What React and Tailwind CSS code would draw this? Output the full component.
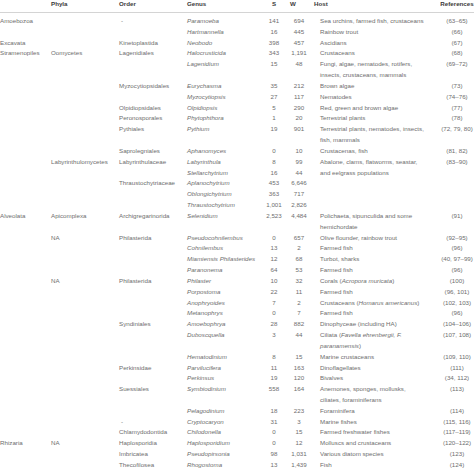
import React from 'react';

// Column template shared by header and body rows
const COLS = 'grid grid-cols-[51px_68px_68px_75px_24px_26px_128px_34px]';

const I = ({ children }) => <i>{children}</i>;

// [supergroup, phyla, order, genus, S, W, host, reference]
const ROWS = [
  ['Amoebozoa', '', '-', 'Paramoeba', '141', '694', 'Sea urchins, farmed fish, crustaceans', '(63–65)'],
  ['', '', '', 'Hartmannella', '16', '445', 'Rainbow trout', '(66)'],
  ['Excavata', '', 'Kinetoplastida', 'Neobodo', '398', '457', 'Ascidians', '(67)'],
  ['Stramenopiles', 'Oomycetes', 'Lagenidiales', 'Halocrusticida', '343', '1,191', 'Crustaceans', '(68)'],
  ['', '', '', 'Lagenidium', '15', '48', 'Fungi, algae, nematodes, rotifers,', '(69–72)'],
  ['', '', '', '', '', '', 'insects, crustaceans, mammals', ''],
  ['', '', 'Myzocytiopsidales', 'Eurychasma', '35', '212', 'Brown algae', '(73)'],
  ['', '', '', 'Myzocytiopsis', '27', '117', 'Nematodes', '(74–76)'],
  ['', '', 'Olpidiopsidales', 'Olpidiopsis', '5', '290', 'Red, green and brown algae', '(77)'],
  ['', '', 'Peronosporales', 'Phytophthora', '1', '20', 'Terrestrial plants', '(78)'],
  ['', '', 'Pythiales', 'Pythium', '19', '901', 'Terrestrial plants, nematodes, insects,', '(72, 79, 80)'],
  ['', '', '', '', '', '', 'fish, mammals', ''],
  ['', '', 'Saprolegniales', 'Aphanomyces', '0', '10', 'Crustacenas, fish', '(81, 82)'],
  ['', 'Labyrinthulomycetes', 'Labyrinthulaceae', 'Labyrinthula', '8', '99', 'Abalone, clams, flatworms, seastar,', '(83–90)'],
  ['', '', '', 'Stellarchytrium', '16', '44', 'and eelgrass populations', ''],
  ['', '', 'Thraustochytriaceae', 'Aplanochytrium', '453', '6,646', '', ''],
  ['', '', '', 'Oblongichytrium', '363', '717', '', ''],
  ['', '', '', 'Thraustochytrium', '1,001', '2,826', '', ''],
  ['Alveolata', 'Apicomplexa', 'Archigregarinorida', 'Selenidium', '2,523', '4,484', 'Polichaeta, sipunculida and some', '(91)'],
  ['', '', '', '', '', '', 'hemichordate', ''],
  ['', 'NA', 'Philasterida', 'Pseudocohnilembus', '0', '657', 'Olive flounder, rainbow trout', '(92–95)'],
  ['', '', '', 'Cohnilembus', '13', '2', 'Farmed fish', '(96)'],
  ['', '', '', 'Miamiensis Philasterides', '12', '68', 'Turbot, sharks', '(40, 97–99)'],
  ['', '', '', 'Paranonema', '64', '53', 'Farmed fish', '(96)'],
  ['', 'NA', 'Philasterida', 'Philaster', '10', '32', <>Corals (<I>Acropora muricata</I>)</>, '(100)'],
  ['', '', '', 'Porpostoma', '22', '11', 'Farmed fish', '(96, 101)'],
  ['', '', '', 'Anophryoides', '7', '2', <>Crustaceans (<I>Homarus americanus</I>)</>, '(102, 103)'],
  ['', '', '', 'Metanophrys', '0', '7', 'Farmed fish', '(96)'],
  ['', '', 'Syndiniales', 'Amoebophrya', '28', '882', 'Dinophyceae (including HA)', '(104–106)'],
  ['', '', '', 'Duboscquella', '3', '44', <>Ciliata (<I>Favella ehrenbergii, F.</I></>, '(107, 108)'],
  ['', '', '', '', '', '', <><I>paranamensis</I>)</>, ''],
  ['', '', '', 'Hematodinium', '8', '15', 'Marine crustaceans', '(109, 110)'],
  ['', '', 'Perkinsidae', 'Parvilucifera', '11', '163', 'Dinoflagellates', '(111)'],
  ['', '', '', 'Perkinsus', '19', '120', 'Bivalves', '(34, 112)'],
  ['', '', 'Suessiales', 'Symbiodinium', '558', '164', 'Anemones, sponges, mollusks,', '(113)'],
  ['', '', '', '', '', '', 'ciliates, foraminiferans', ''],
  ['', '', '', 'Pelagodinium', '18', '223', 'Foraminifera', '(114)'],
  ['', '', '-', 'Cryptocaryon', '31', '3', 'Marine fishes', '(115, 116)'],
  ['', '', 'Chlamydodontida', 'Chilodonella', '0', '15', 'Farmed freshwater fishes', '(117–119)'],
  ['Rhizaria', 'NA', 'Haplosporidia', 'Haplosporidium', '0', '12', 'Molluscs and crustaceans', '(120–122)'],
  ['', '', 'Imbricatea', 'Pseudopirsonia', '98', '1,031', 'Various diatom species', '(123)'],
  ['', '', 'Thecofilosea', 'Rhogostoma', '13', '1,439', 'Fish', '(124)'],
];

const Cell = ({ children, className = '' }) => (
  <div className={`whitespace-nowrap ${className}`}>{children}</div>
);

export default function App() {
  return (
    <div
      className="w-[474px] h-[468px] overflow-hidden bg-white text-[6.2px] text-[#6e6e6e]"
      style={{ fontFamily: '"Liberation Sans", Arial, sans-serif' }}
    >
      {/* Header */}
      <div className={`${COLS} h-[13px] border-b border-[#d4d4d4] leading-[7px] font-bold text-[#3a3a3a]`}>
        <Cell></Cell>
        <Cell>Phyla</Cell>
        <Cell>Order</Cell>
        <Cell>Genus</Cell>
        <Cell className="text-center">S</Cell>
        <Cell className="pl-[4px]">W</Cell>
        <Cell className="pl-[2px]">Host</Cell>
        <Cell className="flex justify-center">References</Cell>
      </div>

      {/* Body */}
      <div className="pt-[3px]">
        {ROWS.map((r, i) => (
          <div key={i} className={`${COLS} h-[10.84px] leading-[10.84px]`}>
            <Cell>{r[0]}</Cell>
            <Cell>{r[1]}</Cell>
            <Cell className={r[2] === '-' ? 'pl-[2px]' : ''}>{r[2]}</Cell>
            <Cell className="italic">{r[3]}</Cell>
            <Cell className="text-center">{r[4]}</Cell>
            <Cell className="text-center">{r[5]}</Cell>
            <Cell className="pl-[8px]">{r[6]}</Cell>
            <Cell className="flex justify-center">{r[7]}</Cell>
          </div>
        ))}
      </div>
    </div>
  );
}
